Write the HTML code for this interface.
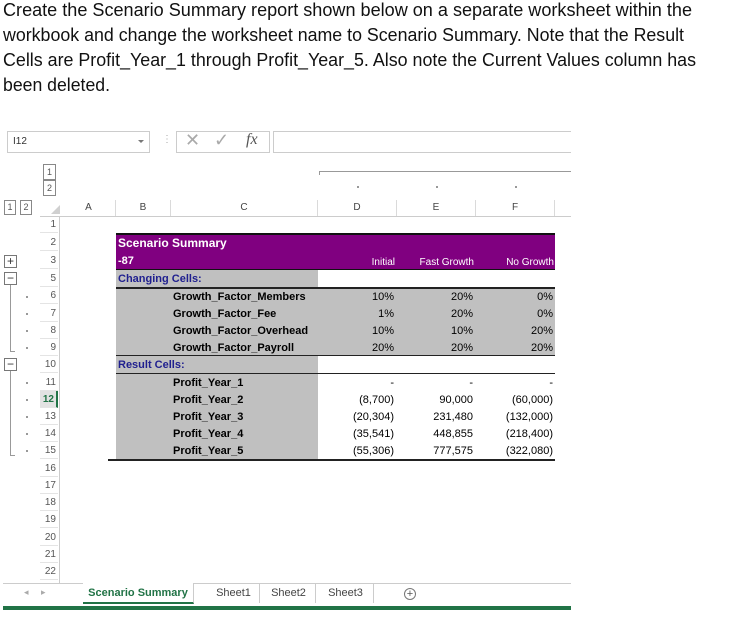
<!DOCTYPE html>
<html><head><meta charset="utf-8"><style>
*{margin:0;padding:0;box-sizing:border-box}
body{width:746px;height:626px;background:#fff;position:relative;overflow:hidden;font-family:"Liberation Sans",sans-serif;}
.a{position:absolute}
.rh{position:absolute;left:40px;width:18px;text-align:right;font-size:10px;color:#555;height:17px;line-height:17px;border-bottom:1px solid #e4e4e4;padding-right:2px}
.ch{position:absolute;top:200px;height:16px;line-height:16px;font-size:10px;color:#444;text-align:center;border-right:1px solid #dadada}
.t{position:absolute;font-size:11px;line-height:17px;white-space:nowrap}
.b{font-weight:bold}
.r{text-align:right}
.dot{position:absolute;width:2px;height:2px;background:#999}
</style></head><body>
<svg class="a" style="left:0;top:0" width="746" height="100">
<g font-family="Liberation Sans, sans-serif" font-size="18" fill="#111">
<text x="3" y="16" textLength="689" lengthAdjust="spacingAndGlyphs">Create the Scenario Summary report shown below on a separate worksheet within the</text>
<text x="3" y="41" textLength="681" lengthAdjust="spacingAndGlyphs">workbook and change the worksheet name to Scenario Summary. Note that the Result</text>
<text x="3" y="66" textLength="693" lengthAdjust="spacingAndGlyphs">Cells are Profit_Year_1 through Profit_Year_5. Also note the Current Values column has</text>
<text x="3" y="91" textLength="107" lengthAdjust="spacingAndGlyphs">been deleted.</text>
</g></svg>

<!-- formula bar -->
<div class="a" style="left:7px;top:131px;width:143px;height:22px;border:1px solid #ccc;font-size:10px;line-height:20px;padding-left:5px;color:#333">I12</div>
<div class="a" style="left:138px;top:140px;width:0;height:0;border-left:3px solid transparent;border-right:3px solid transparent;border-top:3px solid #777"></div>
<div class="a" style="left:162px;top:134px;font-size:10px;color:#aaa">⋮</div>
<div class="a" style="left:176px;top:131px;width:94px;height:22px;border:1px solid #ccc"></div>
<div class="a" style="left:185px;top:130px;font-size:18px;color:#aaa">✕</div>
<div class="a" style="left:214px;top:130px;font-size:18px;color:#aaa">✓</div>
<div class="a" style="left:246px;top:131px;font-size:16px;color:#555;font-style:italic;font-family:'Liberation Serif',serif">fx</div>
<div class="a" style="left:273px;top:131px;width:298px;height:22px;border-top:1px solid #ccc;border-bottom:1px solid #ccc;border-left:1px solid #ccc"></div>

<!-- outline level boxes -->
<div class="a" style="left:43px;top:164px;width:13px;height:16px;border:1px solid #888;font-size:9px;text-align:center;line-height:14px;color:#555">1</div>
<div class="a" style="left:43px;top:180px;width:13px;height:16px;border:1px solid #888;font-size:9px;text-align:center;line-height:14px;color:#555">2</div>
<div class="a" style="left:319px;top:171px;width:252px;height:4px;border-top:1px solid #999;border-left:1px solid #999"></div>
<div class="dot" style="left:357px;top:186px"></div><div class="dot" style="left:436px;top:186px"></div><div class="dot" style="left:515px;top:186px"></div>

<!-- column headers -->
<div class="a" style="left:4px;top:200px;width:12px;height:15px;border:1px solid #888;font-size:9px;text-align:center;line-height:13px;color:#555">1</div>
<div class="a" style="left:20px;top:200px;width:12px;height:15px;border:1px solid #888;font-size:9px;text-align:center;line-height:13px;color:#555">2</div>
<div class="a" style="left:51px;top:205px;width:0;height:0;border-left:9px solid transparent;border-bottom:9px solid #d0d0d0"></div>
<div class="ch" style="left:62px;width:54px">A</div>
<div class="ch" style="left:116px;width:55px">B</div>
<div class="ch" style="left:171px;width:147px">C</div>
<div class="ch" style="left:318px;width:79px">D</div>
<div class="ch" style="left:397px;width:79px">E</div>
<div class="ch" style="left:476px;width:79px">F</div>
<div class="a" style="left:40px;top:216px;width:531px;height:1px;background:#ccc"></div>
<div class="a" style="left:59px;top:216px;width:1px;height:367px;background:#ccc"></div>

<!-- row headers -->
<div class="rh" style="top:216px">1</div>
<div class="rh" style="top:234px">2</div>
<div class="rh" style="top:252px">3</div>
<div class="rh" style="top:270px">5</div>
<div class="rh" style="top:287px">6</div>
<div class="rh" style="top:305px">7</div>
<div class="rh" style="top:322px">8</div>
<div class="rh" style="top:339px">9</div>
<div class="rh" style="top:356px">10</div>
<div class="rh" style="top:374px">11</div>
<div class="rh b" style="top:391px;background:#e2e2e2;color:#217346;border-right:2px solid #217346">12</div>
<div class="rh" style="top:408px">13</div>
<div class="rh" style="top:425px">14</div>
<div class="rh" style="top:442px">15</div>
<div class="rh" style="top:460px">16</div>
<div class="rh" style="top:477px">17</div>
<div class="rh" style="top:494px">18</div>
<div class="rh" style="top:511px">19</div>
<div class="rh" style="top:529px">20</div>
<div class="rh" style="top:546px">21</div>
<div class="rh" style="top:563px">22</div>

<!-- outline symbols -->
<div class="a" style="left:4px;top:255px;width:13px;height:13px;border:1px solid #777;font-size:12px;line-height:10px;text-align:center;color:#333">+</div>
<div class="a" style="left:4px;top:272px;width:13px;height:13px;border:1px solid #777;font-size:12px;line-height:10px;text-align:center;color:#333">−</div>
<div class="a" style="left:10px;top:285px;width:1px;height:66px;background:#999"></div>
<div class="a" style="left:10px;top:351px;width:5px;height:1px;background:#999"></div>
<div class="a" style="left:4px;top:358px;width:13px;height:13px;border:1px solid #777;font-size:12px;line-height:10px;text-align:center;color:#333">−</div>
<div class="a" style="left:10px;top:371px;width:1px;height:84px;background:#999"></div>
<div class="a" style="left:10px;top:455px;width:5px;height:1px;background:#999"></div>
<div class="dot" style="left:26px;top:296px"></div><div class="dot" style="left:26px;top:313px"></div><div class="dot" style="left:26px;top:330px"></div><div class="dot" style="left:26px;top:347px"></div>
<div class="dot" style="left:26px;top:382px"></div><div class="dot" style="left:26px;top:399px"></div><div class="dot" style="left:26px;top:416px"></div><div class="dot" style="left:26px;top:433px"></div><div class="dot" style="left:26px;top:450px"></div>

<!-- table -->
<div class="a" style="left:116px;top:233px;width:439px;height:37px;background:#800080;border-top:2px solid #111;border-bottom:1px solid #111"></div>
<div class="t b" style="left:118px;top:235px;color:#fff;font-size:12px">Scenario Summary</div>
<div class="t b" style="left:118px;top:253px;color:#fff">-87</div>
<div class="t r" style="left:318px;top:254px;width:77px;color:#fff;font-size:10px">Initial</div>
<div class="t r" style="left:397px;top:254px;width:77px;color:#fff;font-size:10px">Fast Growth</div>
<div class="t r" style="left:476px;top:254px;width:78px;color:#fff;font-size:10px">No Growth</div>

<div class="a" style="left:116px;top:270px;width:202px;height:17px;background:#c0c0c0"></div>
<div class="t b" style="left:118px;top:271px;color:#1f1f8f">Changing Cells:</div>
<div class="a" style="left:116px;top:287px;width:439px;height:2px;background:#222"></div>
<div class="a" style="left:116px;top:289px;width:439px;height:67px;background:#c0c0c0;border-bottom:1px solid #222"></div>
<div class="t b" style="left:173px;top:289px">Growth_Factor_Members</div>
<div class="t b" style="left:173px;top:306px">Growth_Factor_Fee</div>
<div class="t b" style="left:173px;top:323px">Growth_Factor_Overhead</div>
<div class="t b" style="left:173px;top:340px">Growth_Factor_Payroll</div>
<div class="t r" style="left:318px;top:289px;width:76px">10%<br>1%<br>10%<br>20%</div>
<div class="t r" style="left:397px;top:289px;width:76px">20%<br>20%<br>10%<br>20%</div>
<div class="t r" style="left:476px;top:289px;width:77px">0%<br>0%<br>20%<br>20%</div>

<div class="a" style="left:116px;top:356px;width:202px;height:17px;background:#c0c0c0"></div>
<div class="t b" style="left:118px;top:357px;color:#1f1f8f">Result Cells:</div>
<div class="a" style="left:116px;top:373px;width:439px;height:1px;background:#222"></div>
<div class="a" style="left:116px;top:374px;width:202px;height:85px;background:#c0c0c0"></div>
<div class="a" style="left:108px;top:459px;width:447px;height:2px;background:#222"></div>
<div class="t b" style="left:173px;top:375px">Profit_Year_1<br>Profit_Year_2<br>Profit_Year_3<br>Profit_Year_4<br>Profit_Year_5</div>
<div class="t r" style="left:318px;top:375px;width:76px">-<br>(8,700)<br>(20,304)<br>(35,541)<br>(55,306)</div>
<div class="t r" style="left:397px;top:375px;width:76px">-<br>90,000<br>231,480<br>448,855<br>777,575</div>
<div class="t r" style="left:476px;top:375px;width:77px">-<br>(60,000)<br>(132,000)<br>(218,400)<br>(322,080)</div>

<!-- tabs -->
<div class="a" style="left:3px;top:583px;width:568px;height:1px;background:#ccc"></div>
<div class="a" style="left:24px;top:587px;font-size:9px;color:#aaa">◂&nbsp;&nbsp;&nbsp;&nbsp;&nbsp;▸</div>
<div class="a" style="left:83px;top:583px;width:111px;height:21px;border-bottom:2px solid #217346;border-right:1px solid #ccc;background:#fff;font-size:11px;font-weight:bold;color:#217346;text-align:center;line-height:20px">Scenario Summary</div>
<div class="a" style="left:208px;top:584px;width:52px;height:19px;border-right:1px solid #ccc;font-size:11px;color:#444;text-align:center;line-height:19px">Sheet1</div>
<div class="a" style="left:262px;top:584px;width:54px;height:19px;border-right:1px solid #ccc;font-size:11px;color:#444;text-align:center;line-height:19px">Sheet2</div>
<div class="a" style="left:318px;top:584px;width:56px;height:19px;border-right:1px solid #ccc;font-size:11px;color:#444;text-align:center;line-height:19px">Sheet3</div>
<div class="a" style="left:404px;top:588px;width:12px;height:12px;border:1px solid #777;border-radius:50%;font-size:11px;line-height:10px;text-align:center;color:#555">+</div>
<div class="a" style="left:3px;top:606px;width:568px;height:4px;background:#217346"></div>
</body></html>
